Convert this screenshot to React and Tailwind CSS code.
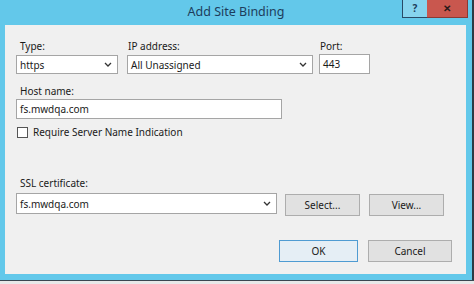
import React from 'react';

const font = { fontFamily: '"Noto Sans", "Open Sans", sans-serif' };

const Chevron = () => (
    <svg width="8" height="5" viewBox="0 0 8 5" className="shrink-0">
        <path d="M1 1 L4 4 L7 1" fill="none" stroke="#333" strokeWidth="1.3" />
    </svg>
);

const Select = ({ value, className }) => (
    <div className={`bg-white border border-[#a5a5a5] flex items-center justify-between pl-[3px] pr-[5px] text-[10px] text-[#1a1a1a] ${className}`}>
        <span className="leading-none">{value}</span>
        <Chevron />
    </div>
);

const Button = ({ label, className }) => (
    <div className={`h-[22px] border flex items-center justify-center text-[10px] text-[#1a1a1a] ${className}`}>
        {label}
    </div>
);

const Label = ({ text, className = '' }) => (
    <div className={`h-[16px] leading-[16px] text-[10px] text-[#1a1a1a] ${className}`}>{text}</div>
);

export default function App() {
    return (
        <div className="w-[474px] h-[284px] bg-[#d9d9d9] overflow-hidden flex flex-col" style={font}>
            <div className="flex">
                <div className="w-[472px] h-[280px] bg-[#63c8ea] flex flex-col">
                    {/* title bar */}
                    <div className="h-[25px] flex relative">
                        <div className="flex-1 text-center text-[12.5px] leading-[24px] text-[#1d3d5c]">Add Site Binding</div>
                        <div className="absolute left-[402px] top-0 w-[26px] h-[18px] bg-[#86d4ee] border border-t-0 border-[#2a4a66] flex items-center justify-center text-[10px] font-bold text-[#1d3d5c]">?</div>
                        <div className="absolute left-[427px] top-0 w-[41px] h-[18px] bg-[#c9574e] border border-t-0 border-l-0 border-[#8a3a35] flex items-center justify-center text-[10px] font-bold text-[#2a1a1a]">✕</div>
                    </div>

                    {/* client area */}
                    <div className="ml-[5px] w-[461px] h-[249px] bg-[#f0f0f0] pl-[11px] pt-[13px]">
                        <div className="flex">
                            <div className="w-[102px]">
                                <Label text="Type:" className="pl-[4px]" />
                                <Select value="https" className="mt-[1px] h-[19px]" />
                            </div>
                            <div className="w-[186px] ml-[9px]">
                                <Label text="IP address:" className="pl-[1px]" />
                                <Select value="All Unassigned" className="mt-[1px] h-[19px]" />
                            </div>
                            <div className="w-[51px] ml-[6px]">
                                <Label text="Port:" className="pl-[1px]" />
                                <div className="h-[20px] bg-white border border-[#a5a5a5] pl-[3px] text-[10px] leading-[18px] text-[#1a1a1a]">443</div>
                            </div>
                        </div>

                        <Label text="Host name:" className="pl-[4px] mt-[9px]" />
                        <div className="w-[266px] h-[20px] bg-white border border-[#a5a5a5] pl-[3px] text-[10px] leading-[18px] text-[#1a1a1a]">fs.mwdqa.com</div>

                        <div className="mt-[6px] h-[14px] flex items-center">
                            <div className="ml-[1px] w-[11px] h-[11px] bg-white border border-[#555]" />
                            <span className="ml-[5px] text-[10px] leading-[14px] text-[#1a1a1a]">Require Server Name Indication</span>
                        </div>

                        <Label text="SSL certificate:" className="pl-[4px] mt-[36px]" />
                        <div className="mt-[2px] flex items-start">
                            <Select value="fs.mwdqa.com" className="w-[261px] h-[21px]" />
                            <Button label="Select..." className="ml-[8px] mt-[1px] w-[75px] bg-[#e1e1e1] border-[#adadad]" />
                            <Button label="View..." className="ml-[9px] mt-[1px] w-[75px] bg-[#e1e1e1] border-[#adadad]" />
                        </div>

                        <div className="mt-[24px] flex pl-[263px]">
                            <Button label="OK" className="w-[79px] border-[#4f9bd2] bg-[#e5eef5]" />
                            <Button label="Cancel" className="ml-[10px] w-[84px] bg-[#e1e1e1] border-[#adadad]" />
                        </div>
                    </div>
                </div>
                <div className="w-[2px] h-[280px] bg-[#2e3b44]" />
            </div>
            <div className="h-[1px] bg-[#3a4650]" />
            <div className="flex-1 bg-[#e8e8e8]" />
        </div>
    );
}
